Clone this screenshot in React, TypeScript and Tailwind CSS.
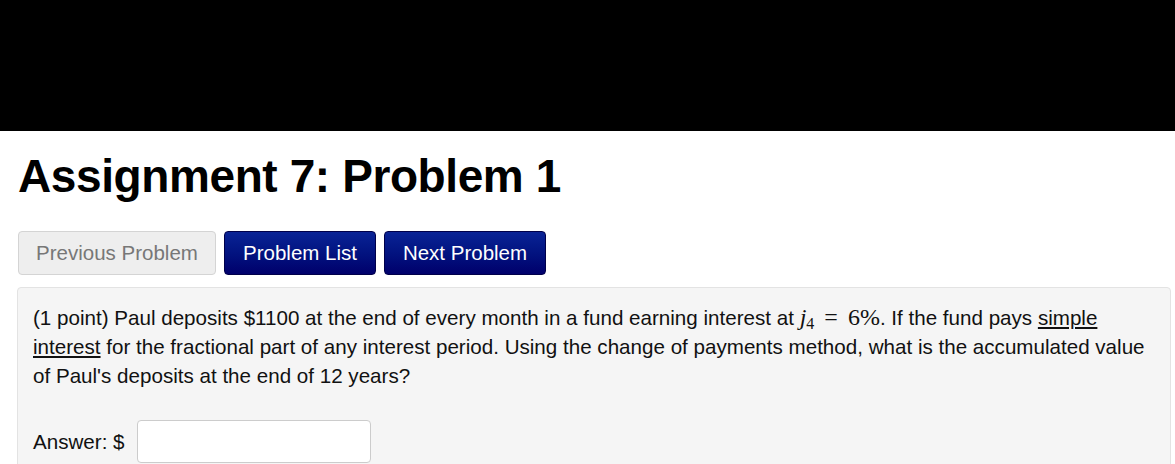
export default function App() {
  return (
    <div className="w-[1175px] h-[464px] overflow-hidden bg-white font-['Liberation_Sans',Arial,sans-serif] text-[#111]">
      <div className="h-[131px] bg-black" />
      <div className="px-[18px]">
        <h1 className="mt-[17px] text-[46px] leading-[56px] font-bold tracking-[-0.4px] text-black">
          Assignment 7: Problem 1
        </h1>
        <div className="mt-[27px] flex gap-[8px]">
          <button className="h-[44px] w-[198px] rounded-[4px] border border-[#d4d4d4] bg-[#eeeeee] text-[20.5px] text-[#777]">
            Previous Problem
          </button>
          <button className="h-[44px] w-[152px] rounded-[4px] border border-[#00004a] bg-gradient-to-b from-[#0a2396] to-[#00006b] text-[20.5px] text-white">
            Problem List
          </button>
          <button className="h-[44px] w-[162px] rounded-[4px] border border-[#00004a] bg-gradient-to-b from-[#0a2396] to-[#00006b] text-[20.5px] text-white">
            Next Problem
          </button>
        </div>
      </div>
      <div className="mt-[12px] ml-[17px] mr-[4px] rounded-[4px] border border-[#e3e3e3] bg-[#f5f5f5] px-[15px] pt-[15px] pb-[20px] text-[20.6px] leading-[29px] text-[#111]">
        <p>
          (1 point) Paul deposits $1100 at the end of every month in a fund earning interest at{' '}
          <span className="font-['Liberation_Serif',serif] text-[24px] leading-[20px]">
            <i>j</i>
            <sub className="text-[16px] -bottom-[4px]">4</sub>
            <span className="mx-[10px]">=</span>6%
          </span>
          . If the fund pays <u>simple interest</u> for the fractional part of any interest period. Using the change of
          payments method, what is the accumulated value of Paul's deposits at the end of 12 years?
        </p>
        <div className="mt-[30px] flex items-center gap-[12px]">
          <span>Answer: $</span>
          <input className="h-[43px] w-[234px] rounded-[4px] border border-[#ccc] bg-white" />
        </div>
      </div>
    </div>
  );
}
